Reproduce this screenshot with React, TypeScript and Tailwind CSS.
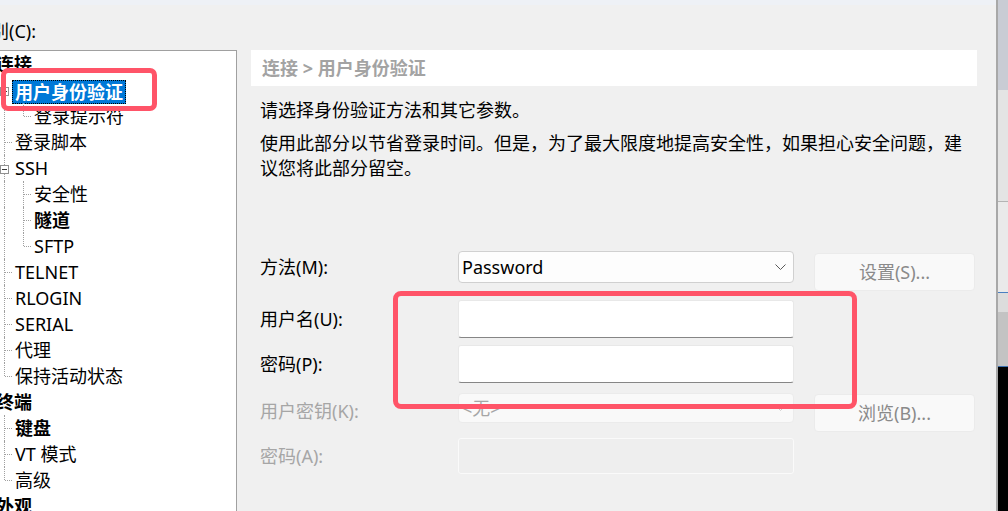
import React from 'react'

type TreeRow = {
  label: string
  level: 0 | 1 | 2
  bold?: boolean
  box?: boolean
  selected?: boolean
  v1?: 'full' | 'half'
  v2?: 'full' | 'half'
}

const rows: TreeRow[] = [
  { label: '连接', level: 0, bold: true },
  { label: '用户身份验证', level: 1, bold: true, box: true, selected: true, v1: 'full' },
  { label: '登录提示符', level: 2, v1: 'full', v2: 'half' },
  { label: '登录脚本', level: 1, v1: 'full' },
  { label: 'SSH', level: 1, box: true, v1: 'full' },
  { label: '安全性', level: 2, v1: 'full', v2: 'full' },
  { label: '隧道', level: 2, bold: true, v1: 'full', v2: 'full' },
  { label: 'SFTP', level: 2, v1: 'full', v2: 'half' },
  { label: 'TELNET', level: 1, v1: 'full' },
  { label: 'RLOGIN', level: 1, v1: 'full' },
  { label: 'SERIAL', level: 1, v1: 'full' },
  { label: '代理', level: 1, v1: 'full' },
  { label: '保持活动状态', level: 1, v1: 'half' },
  { label: '终端', level: 0, bold: true },
  { label: '键盘', level: 1, bold: true, v1: 'full' },
  { label: 'VT 模式', level: 1, v1: 'full' },
  { label: '高级', level: 1, v1: 'half' },
  { label: '外观', level: 0, bold: true },
]

const pads = ['-ml-[4px]', 'pl-[15px]', 'pl-[34px]']

function Chevron({ color }: { color: string }) {
  return (
    <svg width="11" height="6" viewBox="0 0 11 6" fill="none">
      <polyline points="0.5,0.5 5.5,5.5 10.5,0.5" stroke={color} strokeWidth="1" />
    </svg>
  )
}

function Row({ row }: { row: TreeRow }) {
  return (
    <div className={`relative h-[26px] leading-[26px] whitespace-nowrap ${row.selected ? 'pl-[12px]' : pads[row.level]}`}>
      {/* tree connector lines */}
      {row.v1 === 'full' && <span className="absolute left-[4px] top-0 h-[26px] border-l border-dotted border-[#a0a0a0]" />}
      {row.v1 === 'half' && <span className="absolute left-[4px] top-0 h-[13px] border-l border-dotted border-[#a0a0a0]" />}
      {row.v2 === 'full' && <span className="absolute left-[23px] top-0 h-[26px] border-l border-dotted border-[#a0a0a0]" />}
      {row.v2 === 'half' && <span className="absolute left-[23px] top-0 h-[13px] border-l border-dotted border-[#a0a0a0]" />}
      {row.level === 1 && !row.box && <span className="absolute left-[5px] top-[13px] w-[7px] border-t border-dotted border-[#a0a0a0]" />}
      {row.level === 2 && <span className="absolute left-[24px] top-[13px] w-[7px] border-t border-dotted border-[#a0a0a0]" />}
      {row.box && (
        <span className="absolute left-0 top-[10px] w-[9px] h-[9px] border border-[#919191] bg-white flex items-center justify-center">
          <span className="w-[5px] h-px bg-[#3a3a3a]" />
        </span>
      )}
      {row.selected ? (
        <span className="inline-flex h-[24px] items-center px-[2px] bg-[#0078d7] text-white font-bold border border-dotted border-black align-middle">
          {row.label}
        </span>
      ) : (
        <span className={row.bold ? 'font-bold' : ''}>{row.label}</span>
      )}
    </div>
  )
}

export default function App() {
  return (
    <div className="w-[1008px] h-[511px] overflow-hidden flex text-[18px] text-black font-['Noto_Sans','Noto_Sans_CJK_SC',sans-serif]">
      <div className="relative w-[996px] h-full bg-[#f0f0f0] flex flex-col overflow-hidden">
        <div className="h-[5px] bg-[#eef1f6]" />
        <div className="h-[45px] pt-[13px] leading-[26px] whitespace-nowrap">
          <span className="inline-block -ml-[27px]">类别(C):</span>
        </div>

        <div className="flex flex-1 min-h-0">
          {/* Category tree */}
          <div className="w-[237px] bg-white border-t border-r border-[#a0a0a0] overflow-hidden">
            {rows.map((row) => (
              <Row key={row.label} row={row} />
            ))}
          </div>

          {/* Settings page */}
          <div className="flex-1 flex flex-col pl-[14px] pr-[19px]">
            <div className="h-[36px] bg-white flex items-center pl-[11px] font-bold text-[#a3a3a3]">
              连接 &gt; 用户身份验证
            </div>
            <div className="pl-[9px]">
              <p className="mt-[12px] leading-[25px]">请选择身份验证方法和其它参数。</p>
              <p className="mt-[8px] leading-[25px] whitespace-nowrap">
                使用此部分以节省登录时间。但是，为了最大限度地提高安全性，如果担心安全问题，建
                <br />
                议您将此部分留空。
              </p>

              <div className="mt-[70px] flex items-start">
                <div className="w-[198px] h-[32px] flex items-center">方法(M):</div>
                <div className="w-[336px] h-[32px] flex items-center justify-between pl-[3px] pr-[7px] bg-[#fdfdfd] border border-[#d0d0d0] rounded-[4px]">
                  <span>Password</span>
                  <Chevron color="#5a5a5a" />
                </div>
                <button className="ml-[20px] mt-[2px] w-[161px] h-[38px] bg-[#f9f9f9] border border-[#ebebeb] rounded-[4px] text-[#8a8a8a]">
                  设置(S)...
                </button>
              </div>

              <div className="mt-[9px] flex items-start">
                <div className="w-[198px] h-[38px] flex items-center">用户名(U):</div>
                <div className="w-[336px] h-[38px] bg-white border border-[#e8e8e8] border-b-[#868686] rounded-[3px]" />
              </div>

              <div className="mt-[7px] flex items-start">
                <div className="w-[198px] h-[38px] flex items-center">密码(P):</div>
                <div className="w-[336px] h-[38px] bg-white border border-[#e8e8e8] border-b-[#868686] rounded-[3px]" />
              </div>

              <div className="mt-[10px] flex items-start">
                <div className="w-[198px] h-[36px] flex items-center text-[#a6a6a6]">用户密钥(K):</div>
                <div className="w-[336px] h-[30px] flex items-center justify-between pl-[3px] pr-[7px] bg-[#f9f9f9] border border-[#ebebeb] rounded-[4px] text-[#a6a6a6]">
                  <span>&lt;无&gt;</span>
                  <Chevron color="#c8c8c8" />
                </div>
                <button className="ml-[20px] mt-[1px] w-[161px] h-[38px] bg-[#f9f9f9] border border-[#ebebeb] rounded-[4px] text-[#8a8a8a]">
                  浏览(B)...
                </button>
              </div>

              <div className="mt-[6px] flex items-start">
                <div className="w-[198px] h-[36px] flex items-center text-[#a6a6a6]">密码(A):</div>
                <div className="w-[336px] h-[36px] bg-[#eeeeee] border border-[#fafafa] rounded-[3px]" />
              </div>
            </div>
          </div>
        </div>

        {/* red highlight annotations */}
        <div className="absolute left-[1px] top-[68px] w-[156px] h-[43px] border-[5px] border-[#ff5468] rounded-[7px]" />
        <div className="absolute left-[393px] top-[291px] w-[464px] h-[118px] border-[5px] border-[#ff5468] rounded-[8px]" />
      </div>

      {/* window behind, right edge */}
      <div className="w-[12px] h-full flex flex-col border-l-2 border-[#a8a8a8]">
        <div className="h-[90px] bg-[#c9ccd4]" />
        <div className="h-[112px] bg-[#e4e4e4] border-b border-[#b4b4b4]" />
        <div className="h-[91px] bg-[#eaeaea] border-b border-[#4a7fc1]" />
        <div className="h-[19px] bg-[#dcdcdc]" />
        <div className="h-[55px] bg-[#c3c3c3] border-b border-[#3b6fb0]" />
        <div className="flex-1 bg-black" />
      </div>
    </div>
  )
}
